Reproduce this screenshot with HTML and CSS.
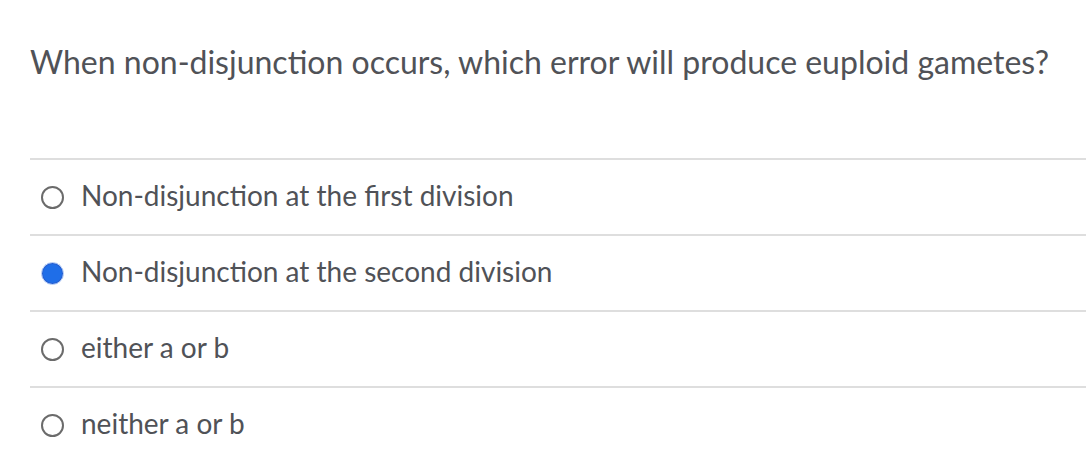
FILE: index.html
```html
<!DOCTYPE html>
<html>
<head>
<meta charset="utf-8">
<link rel="stylesheet" href="styles.css">
</head>
<body>
<div class="quiz">
  <div class="question">When non-disjunction occurs, which error will produce euploid gametes?</div>
  <div class="answers">
    <label class="answer"><span class="radio"></span><span class="text">Non-disjunction at the first division</span></label>
    <label class="answer"><span class="radio checked"></span><span class="text">Non-disjunction at the second division</span></label>
    <label class="answer"><span class="radio"></span><span class="text">either a or b</span></label>
    <label class="answer last"><span class="radio"></span><span class="text">neither a or b</span></label>
  </div>
</div>
</body>
</html>
```
FILE: styles.css
```css
html, body {
  margin: 0;
  padding: 0;
  background: #ffffff;
}
body {
  font-family: Lato, "Open Sans", sans-serif;
  color: #505257;
}
.quiz {
  padding: 41px 0 0 30px;
}
.question {
  font-size: 32px;
  line-height: 42px;
  height: 42px;
}
.answers {
  margin-top: 75px;
}
.answer {
  display: flex;
  align-items: center;
  gap: 17px;
  height: 74px;
  border-top: 2px solid #dedede;
  padding-left: 11px;
  font-size: 28px;
}
.radio {
  width: 19px;
  height: 19px;
  border: 2px solid #6b6b6b;
  border-radius: 50%;
  flex: none;
  box-sizing: content-box;
}
.radio.checked {
  width: 21px;
  height: 21px;
  border: 1px solid #c9d8f5;
  background: #1f6ee8;
  box-shadow: inset 0 0 0 1px #2a5fcf;
}
.text {
  margin-top: -4px;
}
```
